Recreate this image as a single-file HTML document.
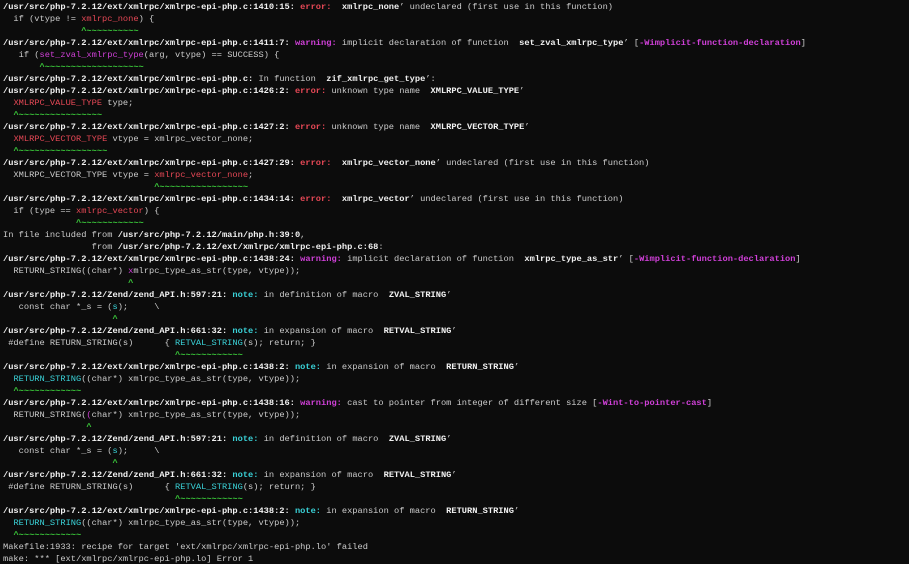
<!DOCTYPE html>
<html><head><meta charset="utf-8"><style>
html,body{margin:0;padding:0;background:#0c0c0c;width:909px;height:564px;overflow:hidden}
pre{margin:0;padding:1px 0 0 3px;font-family:"Liberation Mono",monospace;font-size:8.7px;line-height:12px;color:#cccccc;white-space:pre}
b{color:#f2f2f2;font-weight:bold}
.e{color:#e74856;font-weight:bold}
.w{color:#d040d8;font-weight:bold}
.n{color:#3ad2d8;font-weight:bold}
.g{color:#3ac83a;font-weight:bold}
.r{color:#e74856}
.m{color:#d040d8}
.c{color:#3ad2d8}
.q{color:transparent}
</style></head><body><pre><b>/usr/src/php-7.2.12/ext/xmlrpc/xmlrpc-epi-php.c:1410:15:</b> <span class="e">error:</span> <span class="q">‘</span><b>xmlrpc_none</b>’ undeclared (first use in this function)
  if (vtype != <span class="r">xmlrpc_none</span>) {
               <span class="g">^~~~~~~~~~~</span>
<b>/usr/src/php-7.2.12/ext/xmlrpc/xmlrpc-epi-php.c:1411:7:</b> <span class="w">warning:</span> implicit declaration of function <span class="q">‘</span><b>set_zval_xmlrpc_type</b>’ [<span class="w">-Wimplicit-function-declaration</span>]
   if (<span class="m">set_zval_xmlrpc_type</span>(arg, vtype) == SUCCESS) {
       <span class="g">^~~~~~~~~~~~~~~~~~~~</span>
<b>/usr/src/php-7.2.12/ext/xmlrpc/xmlrpc-epi-php.c:</b> In function <span class="q">‘</span><b>zif_xmlrpc_get_type</b>’:
<b>/usr/src/php-7.2.12/ext/xmlrpc/xmlrpc-epi-php.c:1426:2:</b> <span class="e">error:</span> unknown type name <span class="q">‘</span><b>XMLRPC_VALUE_TYPE</b>’
  <span class="r">XMLRPC_VALUE_TYPE</span> type;
  <span class="g">^~~~~~~~~~~~~~~~~</span>
<b>/usr/src/php-7.2.12/ext/xmlrpc/xmlrpc-epi-php.c:1427:2:</b> <span class="e">error:</span> unknown type name <span class="q">‘</span><b>XMLRPC_VECTOR_TYPE</b>’
  <span class="r">XMLRPC_VECTOR_TYPE</span> vtype = xmlrpc_vector_none;
  <span class="g">^~~~~~~~~~~~~~~~~~</span>
<b>/usr/src/php-7.2.12/ext/xmlrpc/xmlrpc-epi-php.c:1427:29:</b> <span class="e">error:</span> <span class="q">‘</span><b>xmlrpc_vector_none</b>’ undeclared (first use in this function)
  XMLRPC_VECTOR_TYPE vtype = <span class="r">xmlrpc_vector_none</span>;
                             <span class="g">^~~~~~~~~~~~~~~~~~</span>
<b>/usr/src/php-7.2.12/ext/xmlrpc/xmlrpc-epi-php.c:1434:14:</b> <span class="e">error:</span> <span class="q">‘</span><b>xmlrpc_vector</b>’ undeclared (first use in this function)
  if (type == <span class="r">xmlrpc_vector</span>) {
              <span class="g">^~~~~~~~~~~~~</span>
In file included from <b>/usr/src/php-7.2.12/main/php.h:39:0</b>,
                 from <b>/usr/src/php-7.2.12/ext/xmlrpc/xmlrpc-epi-php.c:68</b>:
<b>/usr/src/php-7.2.12/ext/xmlrpc/xmlrpc-epi-php.c:1438:24:</b> <span class="w">warning:</span> implicit declaration of function <span class="q">‘</span><b>xmlrpc_type_as_str</b>’ [<span class="w">-Wimplicit-function-declaration</span>]
  RETURN_STRING((char*) <span class="m">x</span>mlrpc_type_as_str(type, vtype));
                        <span class="g">^</span>
<b>/usr/src/php-7.2.12/Zend/zend_API.h:597:21:</b> <span class="n">note:</span> in definition of macro <span class="q">‘</span><b>ZVAL_STRING</b>’
   const char *_s = (<span class="c">s</span>);     \
                     <span class="g">^</span>
<b>/usr/src/php-7.2.12/Zend/zend_API.h:661:32:</b> <span class="n">note:</span> in expansion of macro <span class="q">‘</span><b>RETVAL_STRING</b>’
 #define RETURN_STRING(s)      { <span class="c">RETVAL_STRING</span>(s); return; }
                                 <span class="g">^~~~~~~~~~~~~</span>
<b>/usr/src/php-7.2.12/ext/xmlrpc/xmlrpc-epi-php.c:1438:2:</b> <span class="n">note:</span> in expansion of macro <span class="q">‘</span><b>RETURN_STRING</b>’
  <span class="c">RETURN_STRING</span>((char*) xmlrpc_type_as_str(type, vtype));
  <span class="g">^~~~~~~~~~~~~</span>
<b>/usr/src/php-7.2.12/ext/xmlrpc/xmlrpc-epi-php.c:1438:16:</b> <span class="w">warning:</span> cast to pointer from integer of different size [<span class="w">-Wint-to-pointer-cast</span>]
  RETURN_STRING(<span class="m">(</span>char*) xmlrpc_type_as_str(type, vtype));
                <span class="g">^</span>
<b>/usr/src/php-7.2.12/Zend/zend_API.h:597:21:</b> <span class="n">note:</span> in definition of macro <span class="q">‘</span><b>ZVAL_STRING</b>’
   const char *_s = (<span class="c">s</span>);     \
                     <span class="g">^</span>
<b>/usr/src/php-7.2.12/Zend/zend_API.h:661:32:</b> <span class="n">note:</span> in expansion of macro <span class="q">‘</span><b>RETVAL_STRING</b>’
 #define RETURN_STRING(s)      { <span class="c">RETVAL_STRING</span>(s); return; }
                                 <span class="g">^~~~~~~~~~~~~</span>
<b>/usr/src/php-7.2.12/ext/xmlrpc/xmlrpc-epi-php.c:1438:2:</b> <span class="n">note:</span> in expansion of macro <span class="q">‘</span><b>RETURN_STRING</b>’
  <span class="c">RETURN_STRING</span>((char*) xmlrpc_type_as_str(type, vtype));
  <span class="g">^~~~~~~~~~~~~</span>
Makefile:1933: recipe for target 'ext/xmlrpc/xmlrpc-epi-php.lo' failed
make: *** [ext/xmlrpc/xmlrpc-epi-php.lo] Error 1</pre></body></html>
